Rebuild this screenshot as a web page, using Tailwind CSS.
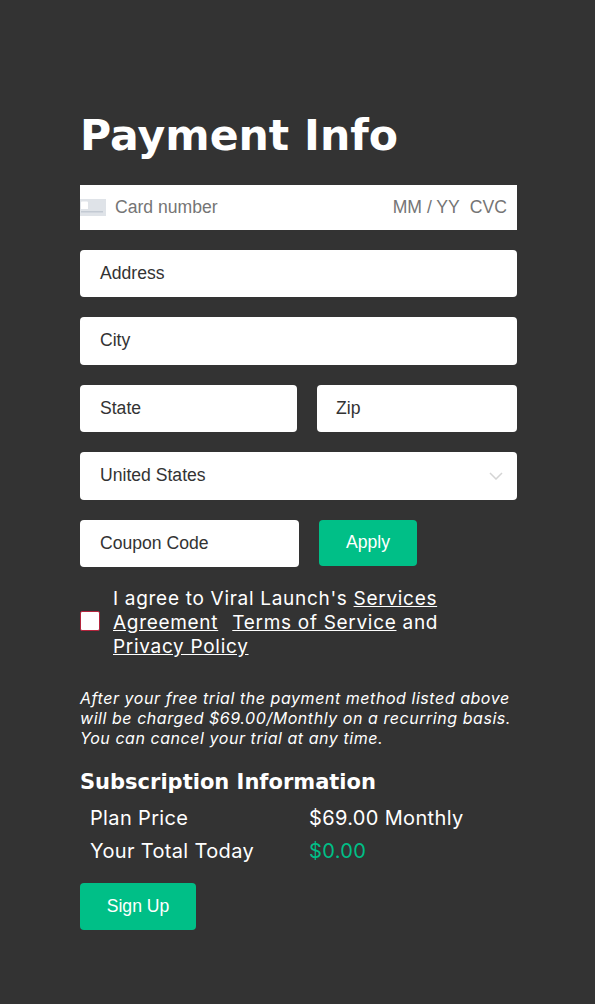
<!DOCTYPE html>
<html lang="en">
<head>
<meta charset="utf-8">
<title>Payment Info</title>
<script src="https://cdn.jsdelivr.net/npm/@tailwindcss/browser@4"></script>
</head>
<body class="bg-[#333333] font-['Liberation_Sans',sans-serif]">
<main class="w-[595px] h-[1004px] pl-[80px] pt-[108px] overflow-hidden">
  <form class="w-[437px]">
    <h1 class="h-[55px] font-['DejaVu_Sans',sans-serif] font-bold text-[42.6px] leading-[55px] text-white whitespace-nowrap">Payment Info</h1>
    <div class="mt-[22px] h-[45px] bg-white flex items-center text-[17.6px] text-[#757575]">
      <svg class="w-[26px] h-[17px] shrink-0" viewBox="0 0 26 17"><rect width="26" height="17" fill="#dfe3e8"/><path d="M1 3.5a1 1 0 0 1 1-1h5a1 1 0 0 1 1 1V10H1z" fill="#fff"/><rect x="1" y="12" width="22" height="1.5" fill="#c3cad3"/></svg>
      <span class="ml-[9px]">Card number</span>
      <span class="ml-auto">MM / YY</span>
      <span class="ml-[10px] mr-[10px]">CVC</span>
    </div>
    <div class="mt-[20px] h-[47px] bg-white rounded-[4px] px-[20px] flex items-center text-[17.6px] text-[#333]">Address</div>
    <div class="mt-[20px] h-[48px] bg-white rounded-[4px] px-[20px] pb-[1px] flex items-center text-[17.6px] text-[#333]">City</div>
    <div class="mt-[20px] flex gap-[20px]">
      <div class="w-[217px] h-[47px] bg-white rounded-[4px] px-[20px] flex items-center text-[17.6px] text-[#333]">State</div>
      <div class="w-[200px] h-[47px] bg-white rounded-[4px] pl-[19px] pr-[20px] flex items-center text-[17.6px] text-[#333]">Zip</div>
    </div>
    <div class="mt-[20px] h-[48px] bg-white rounded-[4px] pl-[20px] pr-[14px] pb-[1px] flex items-center justify-between text-[17.6px] text-[#333]">
      <span>United States</span>
      <svg class="w-[14px] h-[8px]" viewBox="0 0 14 8" fill="none" stroke="#d4d4d4" stroke-width="1.5"><path d="M1 1l6 6 6-6"/></svg>
    </div>
    <div class="mt-[20px] flex gap-[20px]">
      <div class="w-[219px] h-[47px] bg-white rounded-[4px] px-[20px] flex items-center text-[17.6px] text-[#333]">Coupon Code</div>
      <button type="button" class="w-[98px] h-[46px] bg-[#00bf87] rounded-[4px] text-white text-[17.6px] pb-[2px]">Apply</button>
    </div>
    <div class="mt-[20px] flex items-center">
      <span class="w-[20px] h-[20px] mb-[4px] bg-white border border-[#b3243c] rounded-[2px] shrink-0"></span>
      <p class="ml-[13px] w-[340px] font-['Inter',sans-serif] text-[19px] leading-[24px] tracking-[0.7px] text-white">I agree to Viral Launch's <a class="underline" href="#">Services Agreement</a> <a class="ml-[8px] underline" href="#">Terms of Service</a> and <a class="underline" href="#">Privacy Policy</a></p>
    </div>
    <p class="mt-[29px] font-['Inter',sans-serif] italic text-[16px] leading-[20px] tracking-[0.55px] text-white whitespace-nowrap">After your free trial the payment method listed above<br>will be charged $69.00/Monthly on a recurring basis.<br>You can cancel your trial at any time.</p>
    <h2 class="mt-[19px] h-[30px] font-['DejaVu_Sans',sans-serif] font-bold text-[21px] leading-[30px] text-white whitespace-nowrap">Subscription Information</h2>
    <div class="mt-[4px] pl-[10px] font-['Inter',sans-serif] text-[20px] tracking-[0.35px] text-white">
      <div class="grid grid-cols-[219px_1fr] h-[33px] items-center"><span>Plan Price</span><span>$69.00 Monthly</span></div>
      <div class="grid grid-cols-[219px_1fr] h-[33px] items-center"><span>Your Total Today</span><span class="text-[#00bf87]">$0.00</span></div>
    </div>
    <button type="button" class="mt-[16px] block w-[116px] h-[47px] bg-[#00bf87] rounded-[4px] text-white text-[17.6px]">Sign Up</button>
  </form>
</main>
</body>
</html>
